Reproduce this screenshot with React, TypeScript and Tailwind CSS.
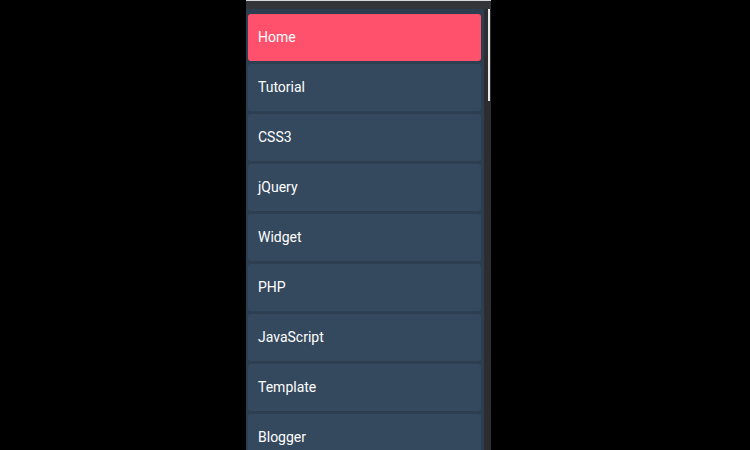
const items = ["Home", "Tutorial", "CSS3", "jQuery", "Widget", "PHP", "JavaScript", "Template", "Blogger"];

export default function App() {
  return (
    <div className="w-[750px] h-[450px] overflow-hidden bg-black flex" style={{ fontFamily: "Roboto, 'Liberation Sans', sans-serif" }}>
      <div className="ml-[246px] w-[245px] h-full flex flex-col">
        <div className="h-px bg-[#d6d6d6]" />
        <div className="h-[8px] bg-[#333538]" />
        <div className="flex flex-1 min-h-0">
          <div className="flex-1 bg-[#2c3e50] pl-[2px] pr-[3px] pt-[5px] overflow-hidden">
            <ul className="flex flex-col gap-[3px]">
              {items.map((name, i) => (
                <li
                  key={name}
                  className={
                    i === 0
                      ? "h-[47px] shrink-0 flex items-center pl-[10px] rounded-[3px] bg-[#ff516b] text-white text-[14px]"
                      : "h-[47px] shrink-0 flex items-center pl-[10px] rounded-[3px] bg-[#34495e] text-white text-[14px]"
                  }
                >
                  {name}
                </li>
              ))}
            </ul>
          </div>
          <div className="w-[7px] bg-[#2b2d30] flex justify-end">
            <div className="w-[2px] h-[92px] bg-[#e8e8e8] mr-[1px]" />
          </div>
        </div>
      </div>
    </div>
  );
}
